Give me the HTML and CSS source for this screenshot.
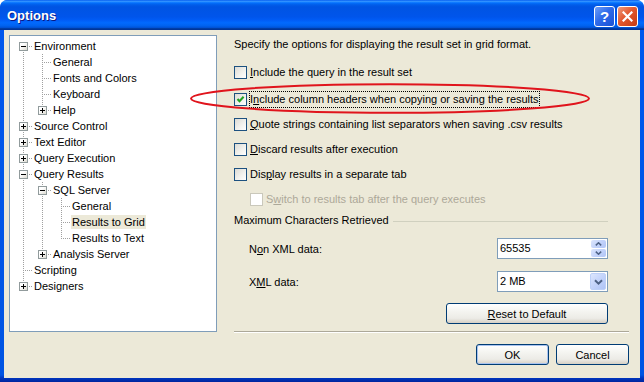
FILE: index.html
```html
<!DOCTYPE html>
<html lang="en">
<head>
<meta charset="utf-8">
<title>Options</title>
<link rel="stylesheet" href="styles.css">
</head>
<body>
<div class="window">
  <div class="titlebar">
    <span class="title">Options</span>
    <div class="caption-btns">
      <span class="cap help">?</span>
      <span class="cap close"><svg width="11" height="11" viewBox="0 0 11 11"><path d="M1.5 1.5 L9.5 9.5 M9.5 1.5 L1.5 9.5" stroke="#fff" stroke-width="2.2" stroke-linecap="square"/></svg></span>
    </div>
  </div>
  <div class="client">
    <div class="tree">
      <div class="node"><span class="c c-f"><i class="exp"></i></span><span class="lbl">Environment</span></div>
      <div class="node"><span class="c c-i"></span><span class="c c-t"></span><span class="lbl">General</span></div>
      <div class="node"><span class="c c-i"></span><span class="c c-t"></span><span class="lbl">Fonts and Colors</span></div>
      <div class="node"><span class="c c-i"></span><span class="c c-t"></span><span class="lbl">Keyboard</span></div>
      <div class="node"><span class="c c-i"></span><span class="c c-l"><i class="exp plus"></i></span><span class="lbl">Help</span></div>
      <div class="node"><span class="c c-t"><i class="exp plus"></i></span><span class="lbl">Source Control</span></div>
      <div class="node"><span class="c c-t"><i class="exp plus"></i></span><span class="lbl">Text Editor</span></div>
      <div class="node"><span class="c c-t"><i class="exp plus"></i></span><span class="lbl">Query Execution</span></div>
      <div class="node"><span class="c c-t"><i class="exp"></i></span><span class="lbl">Query Results</span></div>
      <div class="node"><span class="c c-i"></span><span class="c c-t"><i class="exp"></i></span><span class="lbl">SQL Server</span></div>
      <div class="node"><span class="c c-i"></span><span class="c c-i"></span><span class="c c-t"></span><span class="lbl">General</span></div>
      <div class="node"><span class="c c-i"></span><span class="c c-i"></span><span class="c c-t"></span><span class="lbl sel">Results to Grid</span></div>
      <div class="node"><span class="c c-i"></span><span class="c c-i"></span><span class="c c-l"></span><span class="lbl">Results to Text</span></div>
      <div class="node"><span class="c c-i"></span><span class="c c-l"><i class="exp plus"></i></span><span class="lbl">Analysis Server</span></div>
      <div class="node"><span class="c c-t"></span><span class="lbl">Scripting</span></div>
      <div class="node"><span class="c c-l"><i class="exp plus"></i></span><span class="lbl">Designers</span></div>
    </div>

    <div class="pane">
      <p class="desc">Specify the options for displaying the result set in grid format.</p>
      <div class="checks">
        <div class="chk first"><span class="box"></span><span class="txt"><u>I</u>nclude the query in the result set</span></div>
        <div class="chk"><span class="box"><svg width="11" height="11" viewBox="0 0 11 11"><path d="M2.5 5 L4.5 7.2 L8.6 2.8" fill="none" stroke="#21A121" stroke-width="2.1"/></svg></span><span class="txt focus">I<u>n</u>clude column headers when copying or saving the results</span></div>
        <div class="chk"><span class="box"></span><span class="txt"><u>Q</u>uote strings containing list separators when saving .csv results</span></div>
        <div class="chk"><span class="box"></span><span class="txt"><u>D</u>iscard results after execution</span></div>
        <div class="chk"><span class="box"></span><span class="txt">Dis<u>p</u>lay results in a separate tab</span></div>
        <div class="chk sub"><span class="box off"></span><span class="txt">S<u>w</u>itch to results tab after the query executes</span></div>
      </div>
      <div class="group">Maximum Characters Retrieved</div>
      <div class="field nonxml">
        <span>N<u>o</u>n XML data:</span>
        <div class="spin">
          <span class="val">65535</span>
          <span class="arrows">
            <span class="arr"><svg width="7" height="4" viewBox="0 0 7 4"><path d="M0.8 3.4 L3.5 0.8 L6.2 3.4" fill="none" stroke="#4D6185" stroke-width="1.5"/></svg></span>
            <span class="arr"><svg width="7" height="4" viewBox="0 0 7 4"><path d="M0.8 0.6 L3.5 3.2 L6.2 0.6" fill="none" stroke="#4D6185" stroke-width="1.5"/></svg></span>
          </span>
        </div>
      </div>
      <div class="field xml">
        <span>X<u>M</u>L data:</span>
        <div class="combo">
          <span class="val">2 MB</span>
          <span class="drop"><svg width="9" height="6" viewBox="0 0 9 6"><path d="M1 1.2 L4.5 4.6 L8 1.2" fill="none" stroke="#4D6185" stroke-width="2"/></svg></span>
        </div>
      </div>
      <div class="reset-row"><button class="btn reset" type="button"><u>R</u>eset to Default</button></div>
    </div>

    <div class="actions">
      <button class="btn default" type="button">OK</button>
      <button class="btn" type="button">Cancel</button>
    </div>
  </div>
  <svg class="ring" width="402" height="32" viewBox="0 0 402 32"><ellipse cx="201" cy="15.5" rx="199" ry="14.3" fill="none" stroke="#E0141C" stroke-width="2"/></svg>
</div>
</body>
</html>
```

FILE: styles.css
```css
html, body {
  margin: 0;
  padding: 0;
  background: #ffffff;
}

body {
  font: 11px "Liberation Sans", Arial, sans-serif;
  color: #000;
}

.window {
  position: relative;
  width: 644px;
  height: 382px;
  display: flex;
  flex-direction: column;
  border-radius: 8px 8px 0 0;
  background: linear-gradient(to bottom, #0058EE 0, #0054E3 375px, #0036BF 378px, #00259E 382px);
}

.titlebar {
  height: 30px;
  flex: none;
  display: flex;
  align-items: center;
  justify-content: space-between;
  padding: 0 6px 0 7px;
  border-radius: 7px 7px 0 0;
  background: linear-gradient(to bottom,
    #0058EE 0%, #3593FF 4%, #288EFF 6%, #127DFF 8%, #036FFC 10%,
    #0262EE 14%, #0057E5 20%, #0054E3 24%, #0055EB 56%, #005BF5 66%,
    #026AFE 76%, #0062EF 86%, #0052D6 92%, #0040AB 94%, #003092 100%);
}

.title {
  color: #fff;
  font: bold 13px "Liberation Sans", Arial, sans-serif;
  text-shadow: 1px 1px 0 #0A1883;
  margin-top: 1px;
}

.caption-btns {
  display: flex;
  gap: 2px;
  margin-top: 2px;
}

.cap {
  width: 21px;
  height: 21px;
  box-sizing: border-box;
  border: 1px solid #fff;
  border-radius: 3px;
  display: flex;
  align-items: center;
  justify-content: center;
}

.help {
  color: #fff;
  font: bold 15px "Liberation Sans", Arial, sans-serif;
  background: linear-gradient(135deg, #6D9EF9 0%, #2F6BEA 45%, #1A51D4 100%);
}

.close {
  background: linear-gradient(135deg, #EE9A7C 0%, #E2582F 45%, #C63B12 100%);
}

.client {
  flex: 1;
  margin: 0 4px 4px;
  background: #ECE9D8;
  display: grid;
  grid-template-columns: 208px 1fr;
  grid-template-rows: 297px 21px;
  column-gap: 17px;
  row-gap: 12px;
  padding: 5px 11px 13px 5px;
}

/* ---------- tree ---------- */
.tree {
  border: 1px solid #7F9DB9;
  background: #fff;
  padding-top: 2px;
}

.node {
  height: 16px;
  display: flex;
  padding-left: 4px;
  white-space: nowrap;
}

.c {
  width: 19px;
  height: 16px;
  flex: none;
  box-sizing: border-box;
  padding-left: 5px;
  background-repeat: no-repeat;
}

.c-i {
  background-image: repeating-linear-gradient(to bottom, #A0A0A0 0 1px, transparent 1px 2px);
  background-position: 9px 0;
  background-size: 1px 16px;
}

.c-t {
  background-image:
    repeating-linear-gradient(to bottom, #A0A0A0 0 1px, transparent 1px 2px),
    repeating-linear-gradient(to right, #A0A0A0 0 1px, transparent 1px 2px);
  background-position: 9px 0, 11px 8px;
  background-size: 1px 16px, 8px 1px;
}

.c-l {
  background-image:
    repeating-linear-gradient(to bottom, #A0A0A0 0 1px, transparent 1px 2px),
    repeating-linear-gradient(to right, #A0A0A0 0 1px, transparent 1px 2px);
  background-position: 9px 0, 11px 8px;
  background-size: 1px 9px, 8px 1px;
}

.c-f {
  background-image:
    repeating-linear-gradient(to bottom, #A0A0A0 0 1px, transparent 1px 2px),
    repeating-linear-gradient(to right, #A0A0A0 0 1px, transparent 1px 2px);
  background-position: 9px 8px, 11px 8px;
  background-size: 1px 8px, 8px 1px;
}

.exp {
  display: block;
  width: 9px;
  height: 9px;
  margin-top: 4px;
  box-sizing: border-box;
  border: 1px solid #919B9C;
  background:
    linear-gradient(#000, #000) center / 5px 1px no-repeat,
    linear-gradient(135deg, #ffffff 35%, #DCDAD0 100%);
}

.exp.plus {
  background:
    linear-gradient(#000, #000) center / 5px 1px no-repeat,
    linear-gradient(#000, #000) center / 1px 5px no-repeat,
    linear-gradient(135deg, #ffffff 35%, #DCDAD0 100%);
}

.lbl {
  height: 14px;
  line-height: 14px;
  margin-top: 1px;
  padding: 0 1px;
}

.lbl.sel {
  background: #ECE9D8;
}

/* ---------- right pane ---------- */
.pane {
  display: flex;
  flex-direction: column;
  border-bottom: 1px solid #ACA899;
  box-shadow: 0 1px 0 #fff;
}

.desc {
  margin: 1px 0 0;
  line-height: 16px;
}

.checks {
  margin-top: 8px;
  display: flex;
  flex-direction: column;
}

.chk {
  height: 25px;
  display: flex;
  align-items: center;
  white-space: nowrap;
}

.chk.first {
  margin-bottom: 2px;
}

.chk.sub {
  padding-left: 16px;
  color: #ACA899;
}

.box {
  width: 13px;
  height: 13px;
  flex: none;
  box-sizing: border-box;
  border: 1px solid #1C5180;
  background: linear-gradient(135deg, #DCDBD5 0%, #F3F3EF 60%, #ffffff 100%);
  display: flex;
  align-items: center;
  justify-content: center;
}

.box.off {
  border-color: #CAC8BB;
  background: #fff;
}

.txt {
  margin-left: 2px;
  border: 1px solid transparent;
  padding: 1px 0;
  line-height: 13px;
}

.txt.focus {
  border: 1px dotted #000;
}

.group {
  display: flex;
  align-items: center;
  line-height: 16px;
  padding-right: 21px;
  white-space: nowrap;
}

.group::after {
  content: "";
  flex: 1;
  border-top: 1px solid #D0D0BF;
  margin-left: 4px;
  margin-top: 2px;
}

.field {
  height: 21px;
  display: flex;
  align-items: center;
  justify-content: space-between;
  padding: 0 21px 0 15px;
}

.field.nonxml { margin-top: 10px; }
.field.xml { margin-top: 12px; }

.spin, .combo {
  width: 111px;
  height: 21px;
  box-sizing: border-box;
  border: 1px solid #7F9DB9;
  background: #fff;
  display: flex;
}

.val {
  flex: 1;
  padding-left: 2px;
  line-height: 19px;
}

.arrows {
  width: 15px;
  margin: 1px;
  display: flex;
  flex-direction: column;
  gap: 1px;
}

.arr {
  flex: 1;
  border-radius: 2px;
  background: linear-gradient(135deg, #DCE6FD 0%, #C3D3FB 50%, #B1C5F6 100%);
  display: flex;
  align-items: center;
  justify-content: center;
}

.drop {
  width: 16px;
  margin: 1px;
  border-radius: 2px;
  border: 1px solid #BDD0F8;
  box-sizing: border-box;
  background: linear-gradient(135deg, #DCE6FD 0%, #C3D3FB 50%, #AFC4F6 100%);
  display: flex;
  align-items: center;
  justify-content: center;
}

.reset-row {
  margin-top: 11px;
  display: flex;
  justify-content: flex-end;
  padding-right: 21px;
}

.btn {
  height: 21px;
  width: 73px;
  box-sizing: border-box;
  border: 1px solid #003C74;
  border-radius: 3px;
  padding: 0;
  font: 11px "Liberation Sans", Arial, sans-serif;
  color: #000;
  background: linear-gradient(to bottom, #FFFFFF 0%, #F4F4F0 40%, #ECEBE6 75%, #D6D0C5 100%);
}

.btn.reset {
  width: 162px;
}

.btn.default {
  box-shadow: inset 0 0 0 1px #A9C3EF;
}

.actions {
  grid-column: 1 / -1;
  display: flex;
  justify-content: flex-end;
  gap: 7px;
}

.ring {
  position: absolute;
  left: 189px;
  top: 83px;
}
```
